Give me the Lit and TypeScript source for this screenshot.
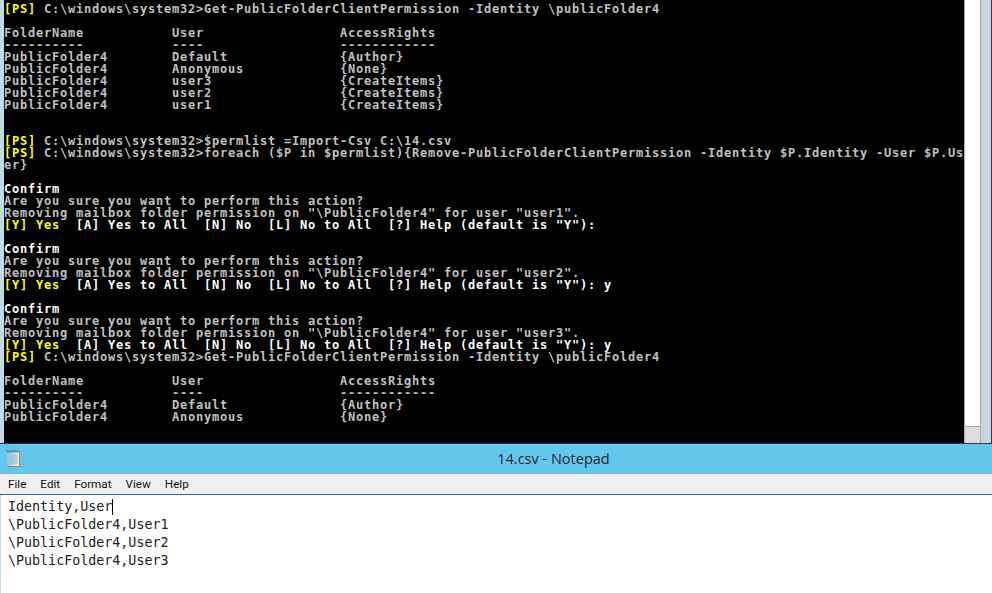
import { LitElement, html, css } from "lit";
import { customElement } from "lit/decorators.js";

const P = "PROMPT";
const lines: string[] = [
  P + "Get-PublicFolderClientPermission -Identity \\publicFolder4",
  "",
  "FolderName           User                 AccessRights",
  "----------           ----                 ------------",
  "PublicFolder4        Default              {Author}",
  "PublicFolder4        Anonymous            {None}",
  "PublicFolder4        user3                {CreateItems}",
  "PublicFolder4        user2                {CreateItems}",
  "PublicFolder4        user1                {CreateItems}",
  "",
  "",
  P + "$permlist =Import-Csv C:\\14.csv",
  P + "foreach ($P in $permlist){Remove-PublicFolderClientPermission -Identity $P.Identity -User $P.Us",
  "er}",
  "",
  "!Confirm",
  "Are you sure you want to perform this action?",
  'Removing mailbox folder permission on "\\PublicFolder4" for user "user1".',
  "OPTS",
  "",
  "!Confirm",
  "Are you sure you want to perform this action?",
  'Removing mailbox folder permission on "\\PublicFolder4" for user "user2".',
  "OPTS y",
  "",
  "!Confirm",
  "Are you sure you want to perform this action?",
  'Removing mailbox folder permission on "\\PublicFolder4" for user "user3".',
  "OPTS y",
  P + "Get-PublicFolderClientPermission -Identity \\publicFolder4",
  "",
  "FolderName           User                 AccessRights",
  "----------           ----                 ------------",
  "PublicFolder4        Default              {Author}",
  "PublicFolder4        Anonymous            {None}",
];

const OPTS = '  [A] Yes to All  [N] No  [L] No to All  [?] Help (default is "Y"):';

@customElement("app-root")
export class AppRoot extends LitElement {
  static styles = css`
    :host { display: flex; flex-direction: column; width: 992px; height: 593px; overflow: hidden; background: #fff; }
    .console { display: flex; height: 443px; background: #000; flex: none; }
    .edge { width: 4px; background: #c6d9e1; flex: none; }
    .term { flex: 1; min-width: 0; padding-top: 3px; overflow: hidden; }
    .row { height: 12px; line-height: 12px; white-space: pre; color: #c0c0c0; font-family: "DejaVu Sans Mono", monospace; font-size: 12px; letter-spacing: 0.776px; font-weight: 700; }
    .y { color: #ffff00; }
    .w { color: #fff; }
    .track { width: 15px; flex: none; display: flex; flex-direction: column; background: #fff; border-left: 1px solid #a9a9a9; border-right: 1px solid #a9a9a9; }
    .space { flex: 1; }
    .thumb { height: 16px; background: #dcdcdc; border-top: 1px solid #a9a9a9; }
    .frame { width: 10px; flex: none; background: #c3d6de; border-right: 1px solid #2b3440; }
    .sep { height: 1px; background: #2d3a44; flex: none; }
    .title { height: 29px; flex: none; display: flex; align-items: center; background: #63c7eb; border-bottom: 1px solid #7cbad6; padding-left: 5px; }
    .title svg { flex: none; }
    .title span { flex: 1; text-align: center; padding-left: 95px; font: 14.5px "Open Sans", "Noto Sans", sans-serif; color: #1c2a33; }
    .menu { height: 21px; flex: none; display: flex; align-items: center; gap: 14px; padding: 0 0 1px 8px; box-sizing: border-box; background: #f0f0f0; border-bottom: 1px solid #2a6b9b; font: 11.7px Roboto, "Noto Sans", sans-serif; color: #111; }
    .editor { flex: 1; padding: 3px 0 0 7px; border-left: 1px solid #b8dcec; }
    .edit-row { height: 18px; line-height: 18px; white-space: pre; font-family: "DejaVu Sans Mono", monospace; font-size: 13.33px; color: #222; }
    .caret { display: inline-block; width: 1px; height: 16px; background: #000; vertical-align: middle; }
  `;

  renderLine(l: string) {
    if (l.startsWith(P)) {
      return html`<div class="row"><span class="y">[PS]</span> C:\\windows\\system32&gt;${l.slice(P.length)}</div>`;
    }
    if (l.startsWith("!")) return html`<div class="row w">${l.slice(1)}</div>`;
    if (l.startsWith("OPTS")) {
      return html`<div class="row w"><span class="y">[Y] Yes</span>${OPTS}${l.slice(4)}</div>`;
    }
    return html`<div class="row">${l || " "}</div>`;
  }

  render() {
    return html`
      <div class="console">
        <div class="edge"></div>
        <div class="term">${lines.map((l) => this.renderLine(l))}</div>
        <div class="track"><div class="space"></div><div class="thumb"></div></div>
        <div class="frame"></div>
      </div>
      <div class="sep"></div>
      <div class="title">
        <svg width="15" height="17" viewBox="0 0 15 17">
          <defs>
            <linearGradient id="pg" x1="0" y1="0" x2="1" y2="0">
              <stop offset="0" stop-color="#7fcbe6" />
              <stop offset="0.5" stop-color="#b9dde9" />
              <stop offset="1" stop-color="#f2f7f9" />
            </linearGradient>
          </defs>
          <rect x="3" y="2" width="12" height="15" fill="#b5824f" />
          <rect x="2" y="1" width="12" height="15" fill="url(#pg)" />
          <path d="M5 5h8M5 7h8M5 9h8M5 11h8M5 13h8" stroke="#8fbccd" stroke-width="1" />
          <path d="M3 0.5v2M5 0.5v2M7 0.5v2M9 0.5v2M11 0.5v2M13 0.5v2" stroke="#2f3a42" stroke-width="1" />
        </svg>
        <span>14.csv - Notepad</span>
      </div>
      <div class="menu"><span>File</span><span>Edit</span><span>Format</span><span>View</span><span>Help</span></div>
      <div class="editor">
        <div class="edit-row">Identity,User<span class="caret"></span></div>
        <div class="edit-row">\\PublicFolder4,User1</div>
        <div class="edit-row">\\PublicFolder4,User2</div>
        <div class="edit-row">\\PublicFolder4,User3</div>
      </div>
    `;
  }
}
